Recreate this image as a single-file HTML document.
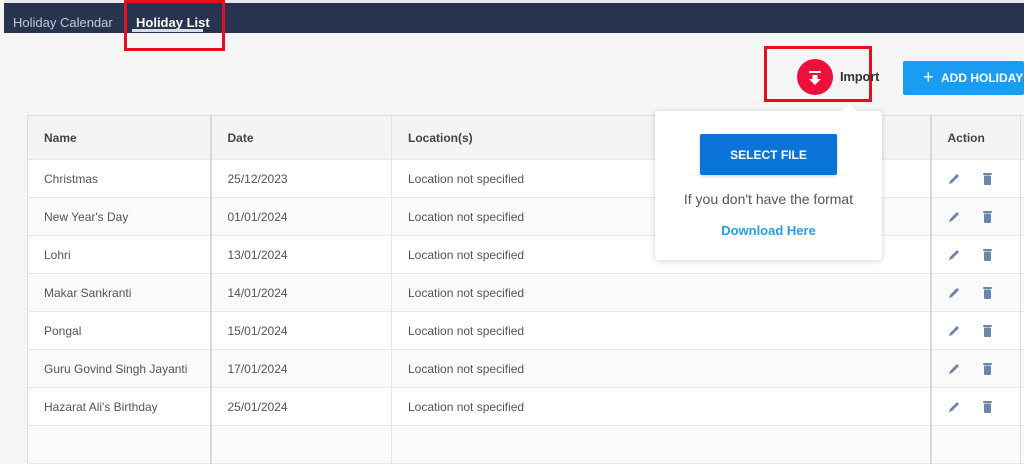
<!DOCTYPE html>
<html><head><meta charset="utf-8"><style>
*{box-sizing:border-box;margin:0;padding:0}
body{width:1024px;height:436px;overflow:hidden;background:#f5f5f6;font-family:"Liberation Sans",sans-serif;position:relative}
.top{position:absolute;left:4px;top:0;width:1020px;height:33px;background:#27334f;border-top:3px solid #e8e8ec}
.tab{position:absolute;top:14px;font-size:13px;color:#c4c8d2}
.tab.act{color:#fff;font-weight:bold;left:132px}
.ul{position:absolute;left:132px;top:29px;width:71px;height:3px;background:#d8dde8}
.red{position:absolute;border:3px solid #e3101e}
table{position:absolute;left:27px;top:115px;width:1050px;table-layout:fixed;border-collapse:collapse;font-size:12px;color:#555}
td,th{height:38px;border-bottom:1px solid #e5e6ea;text-align:left;padding-left:16px;font-weight:normal;white-space:nowrap}
th{height:44px;background:#f4f4f5;font-weight:bold;color:#444;border-top:1px solid #dcdde2}
tr:nth-child(odd) td{background:#fafafa}
tr:nth-child(even) td{background:#fff}
.c1{width:183px;border-left:1px solid #dcdde2;border-right:2px solid #d7d8dc}
.c2{width:181px;border-right:1px solid #e2e3e6}
.c3{width:539px}
.c4{width:90px;border-left:2px solid #d7d8dc;border-right:1px solid #dcdde2}
.c5{width:57px}
.pop{position:absolute;left:655px;top:111px;width:227px;height:149px;background:#fff;border-radius:3px;box-shadow:0 1px 6px rgba(0,0,0,.18);text-align:center}
.pop:before{content:"";position:absolute;left:186px;top:-7px;border:8px solid transparent;border-top:0;border-bottom:7px solid #fff}
.btn{position:absolute;left:45px;top:23px;width:137px;height:41px;background:#0a74d8;border-radius:2px;color:#fff;font-size:12px;font-weight:bold;line-height:43px;box-shadow:0 1px 3px rgba(0,0,0,.2)}
</style></head><body>
<div class="top"><span class="tab" style="left:9px;top:12px">Holiday Calendar</span><span class="tab act" style="top:12px">Holiday List</span></div>
<div class="ul"></div>
<div class="red" style="left:124px;top:0;width:101px;height:51px"></div>
<div class="red" style="left:764px;top:46px;width:108px;height:56px"></div>
<div style="position:absolute;left:797px;top:59px;width:36px;height:36px;border-radius:50%;background:#ef0f3a"><svg width="36" height="36"><rect x="12" y="12" width="12" height="2" fill="#fff"/><path d="M15.5 16h5v4h3.5l-6 6-6-6h3.5z" fill="#fff"/></svg></div>
<div style="position:absolute;left:840px;top:69px;font-size:13px;color:#333;font-weight:bold;letter-spacing:-0.2px">Import</div>
<div style="position:absolute;left:903px;top:61px;width:121px;height:34px;background:#1a9cf2;border-radius:2px;color:#fff;font-size:12px;font-weight:bold;line-height:34px"><span style="font-size:18px;font-weight:normal;position:absolute;left:20px;top:-1px">+</span><span style="position:absolute;left:38px;white-space:nowrap">ADD HOLIDAY</span></div>
<table>
<tr><th class="c1">Name</th><th class="c2">Date</th><th class="c3">Location(s)</th><th class="c4">Action</th><th class="c5"></th></tr>
<tr><td class="c1">Christmas</td><td class="c2">25/12/2023</td><td class="c3">Location not specified</td><td class="c4">I</td><td class="c5"></td></tr>
<tr><td class="c1">New Year's Day</td><td class="c2">01/01/2024</td><td class="c3">Location not specified</td><td class="c4">I</td><td class="c5"></td></tr>
<tr><td class="c1">Lohri</td><td class="c2">13/01/2024</td><td class="c3">Location not specified</td><td class="c4">I</td><td class="c5"></td></tr>
<tr><td class="c1">Makar Sankranti</td><td class="c2">14/01/2024</td><td class="c3">Location not specified</td><td class="c4">I</td><td class="c5"></td></tr>
<tr><td class="c1">Pongal</td><td class="c2">15/01/2024</td><td class="c3">Location not specified</td><td class="c4">I</td><td class="c5"></td></tr>
<tr><td class="c1">Guru Govind Singh Jayanti</td><td class="c2">17/01/2024</td><td class="c3">Location not specified</td><td class="c4">I</td><td class="c5"></td></tr>
<tr><td class="c1">Hazarat Ali's Birthday</td><td class="c2">25/01/2024</td><td class="c3">Location not specified</td><td class="c4">I</td><td class="c5"></td></tr>
<tr><td class="c1" style="height:12px"></td><td class="c2" style="height:12px"></td><td class="c3"></td><td class="c4"></td><td class="c5"></td></tr>
</table>
<div class="pop"><div class="btn">SELECT FILE</div>
<div style="position:absolute;top:80px;width:100%;font-size:14px;color:#555">If you don't have the format</div>
<div style="position:absolute;top:112px;width:100%;font-size:13px;color:#2a9be8;font-weight:bold">Download Here</div></div>
<script>
document.querySelectorAll('td.c4').forEach(function(td){if(td.textContent=='I'){td.innerHTML='<svg width="50" height="14" style="vertical-align:middle"><path d="M1 12l1-3 7-7 2 2-7 7z" fill="#6a86ad"/><rect x="35" y="1" width="9" height="2" rx="1" fill="#6a86ad"/><rect x="36" y="3.5" width="7" height="9.5" rx="1" fill="#6a86ad"/></svg>';}});
</script>
</body></html>
